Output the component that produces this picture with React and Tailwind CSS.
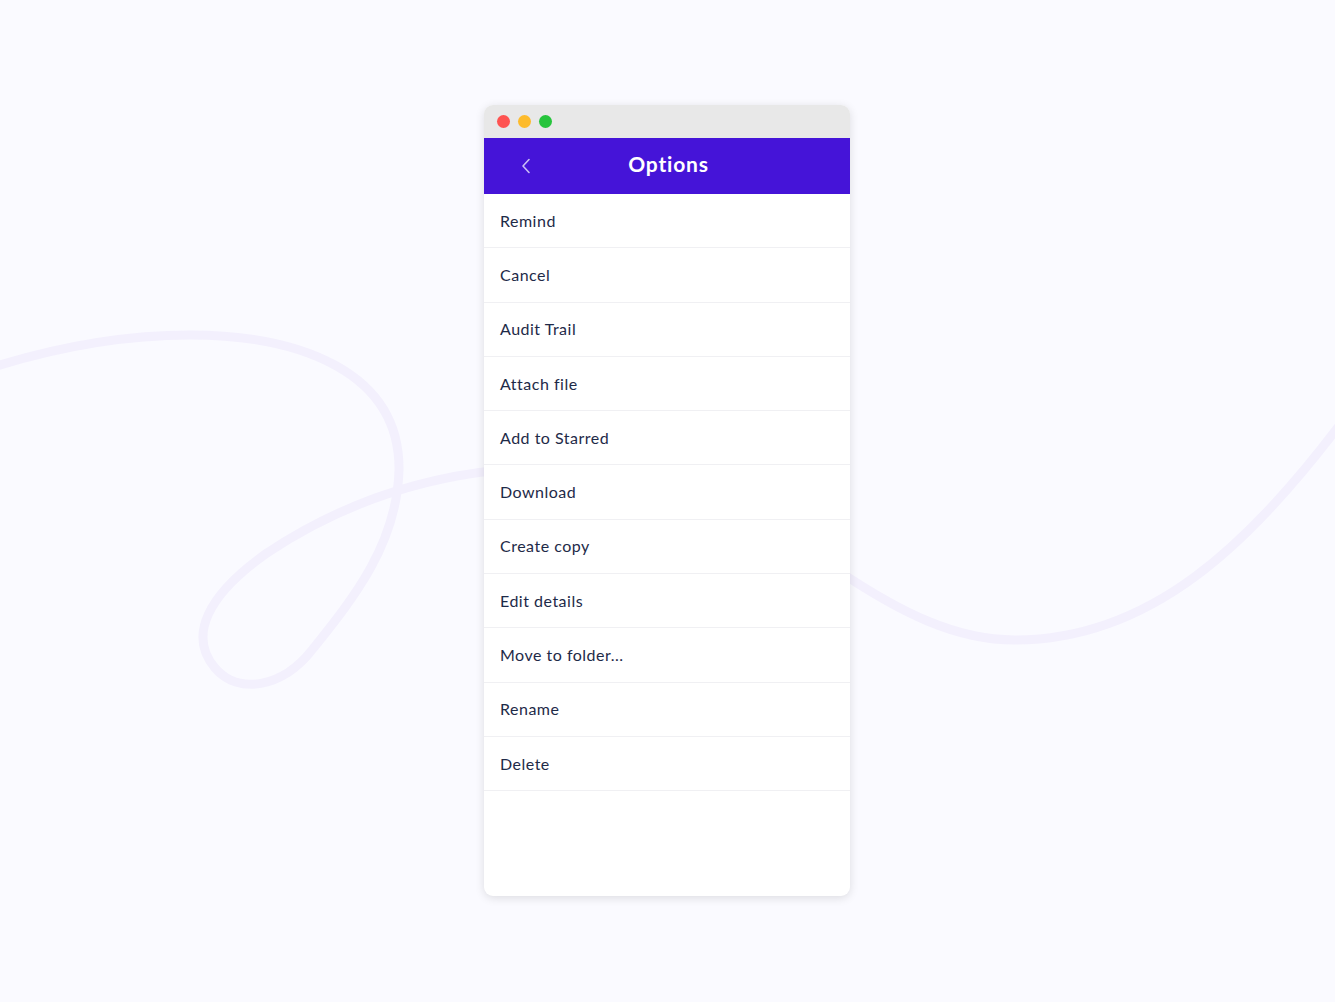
import React from "react";

const items = [
  "Remind",
  "Cancel",
  "Audit Trail",
  "Attach file",
  "Add to Starred",
  "Download",
  "Create copy",
  "Edit details",
  "Move to folder...",
  "Rename",
  "Delete",
];

export default function App() {
  return (
    <div
      className="relative w-full h-[1002px] bg-[#fafaff] overflow-hidden"
      style={{ fontFamily: "Lato, 'Noto Sans', sans-serif" }}
    >
      <svg
        className="absolute inset-0"
        width="1335"
        height="1002"
        viewBox="0 0 1335 1002"
        fill="none"
      >
        <path
          d="M -10 368 C 60 346 130 335 190 335 C 300 335 400 372 399 470 C 397 545 352 600 312 650 C 282 688 238 695 215 668 C 188 636 207 595 267 553 C 342 503 420 478 500 470 M 840 572 C 900 612 955 640 1015 640 C 1150 640 1250 545 1345 418"
          stroke="#f3f0fd"
          strokeWidth="9"
          strokeLinecap="round"
        />
      </svg>

      <div className="absolute left-[484px] top-[105px] w-[366px] h-[791px] bg-white rounded-[9px] overflow-hidden shadow-[0_2px_10px_rgba(0,0,0,0.12)] flex flex-col">
        <div className="h-[33px] bg-[#e8e8e8] flex items-center gap-[8px] pl-[13px] shrink-0">
          <span className="w-[13px] h-[13px] rounded-full bg-[#fe5351]" />
          <span className="w-[13px] h-[13px] rounded-full bg-[#fdbb2c]" />
          <span className="w-[13px] h-[13px] rounded-full bg-[#26c43c]" />
        </div>
        <div className="relative h-[56px] bg-[#4514d8] flex items-center justify-center shrink-0">
          <svg
            className="absolute left-[36px] top-[20px]"
            width="12"
            height="16"
            viewBox="0 0 12 16"
            fill="none"
          >
            <path
              d="M 9 1.5 L 3 8 L 9 14.5"
              stroke="#c9bdf5"
              strokeWidth="1.6"
              strokeLinecap="round"
              strokeLinejoin="round"
            />
          </svg>
          <span className="text-white text-[21px] font-bold tracking-[0.8px] -mt-[5px] ml-[3px]">
            Options
          </span>
        </div>
        <div className="flex flex-col">
          {items.map((t) => (
            <div
              key={t}
              className="h-[54.3px] border-b border-[#f0f0f3] flex items-center pl-[16px] text-[16px] text-[#1e2a48] tracking-[0.5px]"
            >
              {t}
            </div>
          ))}
        </div>
      </div>
    </div>
  );
}
